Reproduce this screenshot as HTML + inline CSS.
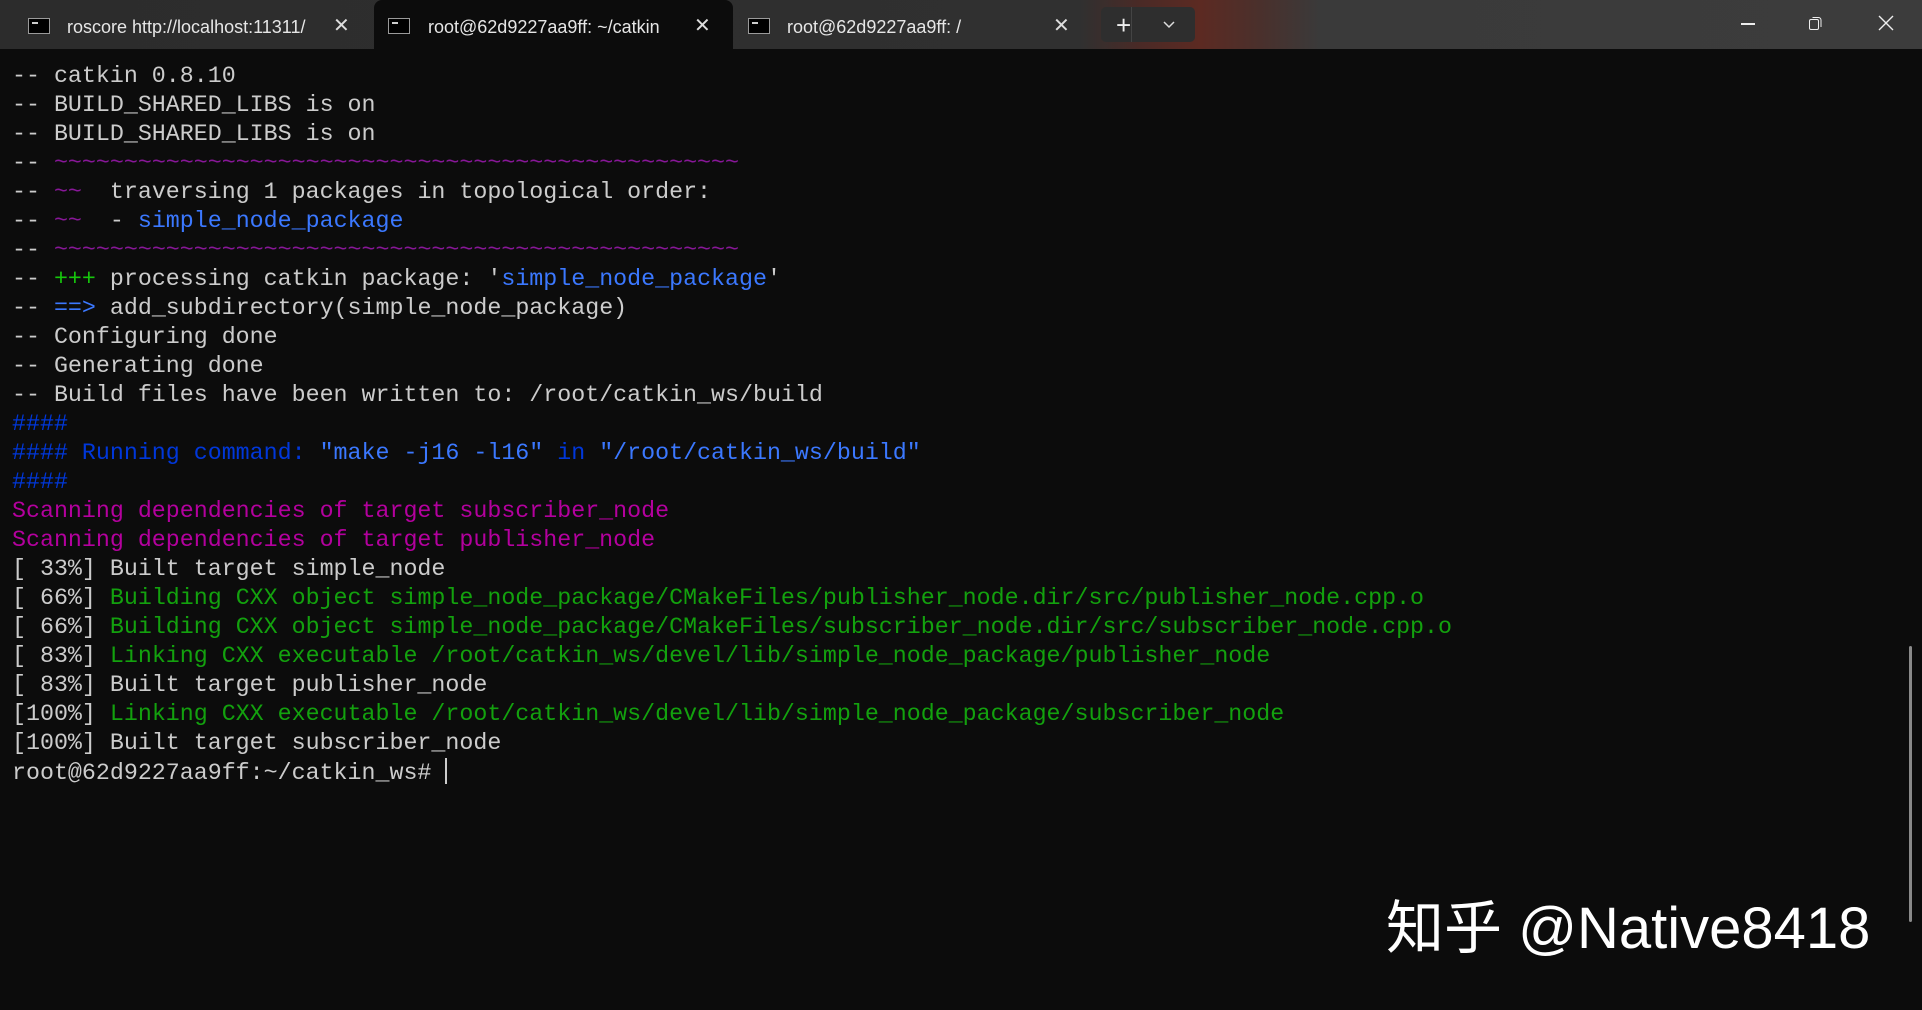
<!DOCTYPE html>
<html><head><meta charset="utf-8"><style>
html,body{margin:0;padding:0;width:1922px;height:1010px;overflow:hidden;background:#0c0c0c}
.bar{position:absolute;left:0;top:0;width:1922px;height:49px;background:linear-gradient(90deg,#2c2c2c 0,#303030 1080px,#4a2a26 1140px,#5c2a22 1200px,#4a302c 1260px,#3a3a3a 1320px,#3c3c3c 1922px)}
.tab{position:absolute;top:0;height:49px;font-family:"Liberation Sans",sans-serif;font-size:18px;color:#e6e6e6}
.tab .ic{position:absolute;top:18px;width:22px;height:16px;background:#000;border:1px solid #9a9a9a;box-sizing:border-box}
.tab .ic:after{content:"";position:absolute;left:3px;top:3px;width:6px;height:2px;background:#ccc}
.tab .t{position:absolute;top:17px;white-space:nowrap}
.tab .x{position:absolute;top:13px;font-size:20px;color:#ddd}
.act{background:#0c0c0c;border-radius:8px 8px 0 0}
.term{position:absolute;left:12px;top:62px;font-family:"Liberation Mono",monospace;font-size:23.3px;line-height:29px;color:#cccccc;white-space:pre}
.m{color:#881798}.b{color:#3b78ff}.d{color:#0037da}.g{color:#13a10e}.G{color:#16c60c}.p{color:#b4009e}
.wm{position:absolute;left:1386px;top:881px;font-family:"Liberation Sans","Noto Sans CJK SC",sans-serif;font-size:58px;color:#fff;white-space:nowrap}
</style></head><body>
<div class="bar"></div>
<div class="tab" style="left:0;width:370px"><div class="ic" style="left:28px"></div><div class="t" style="left:67px">roscore http://localhost:11311/</div><div class="x" style="left:333px">✕</div></div>
<div class="tab act" style="left:374px;width:359px"><div class="ic" style="left:14px"></div><div class="t" style="left:54px">root@62d9227aa9ff: ~/catkin</div><div class="x" style="left:320px">✕</div></div>
<div class="tab" style="left:733px;width:360px"><div class="ic" style="left:15px"></div><div class="t" style="left:54px">root@62d9227aa9ff: /</div><div class="x" style="left:320px">✕</div></div>
<div style="position:absolute;left:1101px;top:7px;width:94px;height:35px;background:#2e2e2e;border-radius:5px"></div>
<div style="position:absolute;left:1131px;top:7px;width:1px;height:35px;background:#444"></div>
<div style="position:absolute;left:1116px;top:10px;color:#eee;font:26px 'Liberation Sans',sans-serif">+</div>
<svg style="position:absolute;left:1162px;top:20px" width="14" height="10"><path d="M2 2l5 5 5-5" stroke="#ddd" stroke-width="1.5" fill="none"/></svg>
<div style="position:absolute;left:1741px;top:23px;width:14px;height:1.5px;background:#eee"></div>
<svg style="position:absolute;left:1808px;top:15px" width="16" height="16"><rect x="1.5" y="4.5" width="9" height="10" rx="1.5" stroke="#eee" fill="none"/><path d="M4.5 2.5h6a2.5 2.5 0 0 1 2.5 2.5v7" stroke="#eee" fill="none"/></svg>
<svg style="position:absolute;left:1878px;top:15px" width="16" height="16"><path d="M1 1l14 14M15 1L1 15" stroke="#eee" stroke-width="1.4"/></svg>
<div class="term">-- catkin 0.8.10
-- BUILD_SHARED_LIBS is on
-- BUILD_SHARED_LIBS is on
-- <span class="m">~~~~~~~~~~~~~~~~~~~~~~~~~~~~~~~~~~~~~~~~~~~~~~~~~</span>
-- <span class="m">~~</span>  traversing 1 packages in topological order:
-- <span class="m">~~</span>  - <span class="b">simple_node_package</span>
-- <span class="m">~~~~~~~~~~~~~~~~~~~~~~~~~~~~~~~~~~~~~~~~~~~~~~~~~</span>
-- <span class="G">+++</span> processing catkin package: '<span class="b">simple_node_package</span>'
-- <span class="b">==></span> add_subdirectory(simple_node_package)
-- Configuring done
-- Generating done
-- Build files have been written to: /root/catkin_ws/build
<span class="d">####</span>
<span class="d">#### Running command: </span><span class="b">"make -j16 -l16"</span><span class="d"> in </span><span class="b">"/root/catkin_ws/build"</span>
<span class="d">####</span>
<span class="p">Scanning dependencies of target subscriber_node</span>
<span class="p">Scanning dependencies of target publisher_node</span>
[ 33%] Built target simple_node
[ 66%] <span class="g">Building CXX object simple_node_package/CMakeFiles/publisher_node.dir/src/publisher_node.cpp.o</span>
[ 66%] <span class="g">Building CXX object simple_node_package/CMakeFiles/subscriber_node.dir/src/subscriber_node.cpp.o</span>
[ 83%] <span class="g">Linking CXX executable /root/catkin_ws/devel/lib/simple_node_package/publisher_node</span>
[ 83%] Built target publisher_node
[100%] <span class="g">Linking CXX executable /root/catkin_ws/devel/lib/simple_node_package/subscriber_node</span>
[100%] Built target subscriber_node
root@62d9227aa9ff:~/catkin_ws# <span style="display:inline-block;width:2px;height:26px;background:#ccc;vertical-align:-5px"></span></div>
<div style="position:absolute;left:1909px;top:646px;width:3px;height:276px;background:#8a8a8a;border-radius:2px"></div>
<div class="wm">知乎 @Native8418</div>
</body></html>
